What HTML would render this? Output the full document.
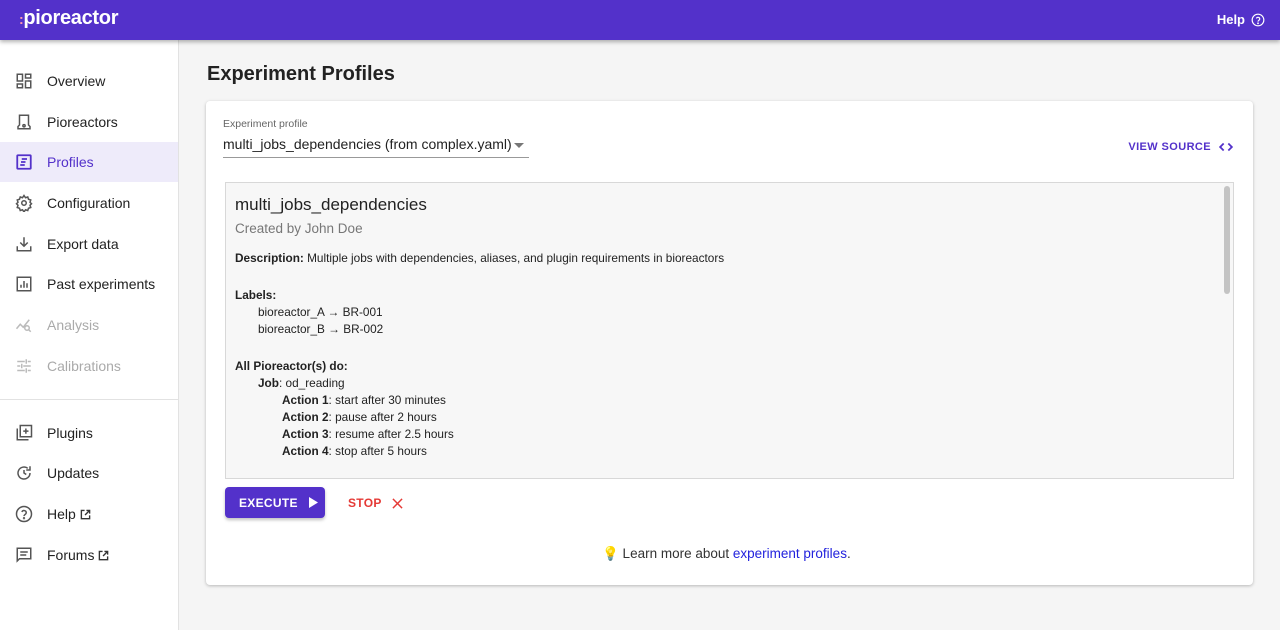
<!DOCTYPE html>
<html><head><meta charset="utf-8"><style>
*{box-sizing:border-box;margin:0;padding:0}
body{width:1280px;height:630px;overflow:hidden;font-family:"Liberation Sans",Arial,sans-serif;background:#f5f5f5;color:#222;position:relative}
.hdr{position:absolute;left:0;top:0;width:1280px;height:40px;background:#5331ca;box-shadow:0 2px 4px rgba(0,0,0,.3);z-index:2}
.logo{position:absolute;left:19px;top:7px;color:#fff;font-size:20px;font-weight:bold;letter-spacing:-.3px}
.help{position:absolute;right:15px;top:12px;color:#fff;font-size:13px;font-weight:bold;display:flex;align-items:center;gap:6px}
.side{position:absolute;left:0;top:40px;width:179px;height:590px;background:#fff;border-right:1px solid #e2e2e2}
.item{position:absolute;left:0;width:178px;height:40px;display:flex;align-items:center;font-size:14px;color:#222}
.item svg{position:absolute;left:15px}
.item span{position:absolute;left:47px}
.sel{background:#eeebfa;color:#5331ca}
.dis{color:#aaa}
.divd{position:absolute;left:0;top:359px;width:178px;border-top:1px solid #e2e2e2}
h1{position:absolute;left:207px;top:63px;font-size:20px;font-weight:bold;color:#222}
.card{position:absolute;left:206px;top:101px;width:1047px;height:484px;background:#fff;border-radius:4px;box-shadow:0 1px 3px rgba(0,0,0,.25)}
.lbl{position:absolute;left:17px;top:17px;font-size:10.5px;color:#666}
.sel2{position:absolute;left:17px;top:35px;width:306px;height:22px;border-bottom:1px solid #999;font-size:14px;color:#222;white-space:nowrap}
.caret{position:absolute;right:5px;top:7px;width:0;height:0;border-left:5px solid transparent;border-right:5px solid transparent;border-top:5px solid #777}
.vs{position:absolute;right:20px;top:40px;color:#5331ca;font-size:11px;font-weight:bold;letter-spacing:.4px;display:flex;align-items:center;gap:8px}
.box{position:absolute;left:19px;top:81px;width:1009px;height:297px;background:#f7f7f7;border:1px solid #d8d8d8;overflow:hidden}
.sb{position:absolute;right:3px;top:3px;width:6px;height:108px;background:#c4c4c4;border-radius:3px}
.box .t{position:absolute;left:9px;top:12px;font-size:17px;color:#222}
.box .c{position:absolute;left:9px;top:38px;font-size:13.5px;color:#777}
.ln{position:absolute;font-size:11.8px;color:#222;white-space:nowrap}
.ex{position:absolute;left:19px;top:386px;width:100px;height:31px;background:#5331ca;border-radius:4px;color:#fff;font-size:12px;font-weight:bold;letter-spacing:.3px;display:flex;align-items:center;padding-left:14px;gap:10px;box-shadow:0 2px 3px rgba(0,0,0,.25)}
.stop{position:absolute;left:142px;top:395px;color:#e53935;font-size:12px;font-weight:bold;letter-spacing:.3px;display:flex;align-items:center;gap:10px}
.learn{position:absolute;left:396px;top:445px;font-size:13.5px;color:#333}
.learn a{color:#2222dd;text-decoration:none}
</style></head><body>
<div class="hdr"><div class="logo"><span style="font-size:14px;color:#f9a">:</span>pioreactor</div>
<div class="help">Help <svg width="14" height="14" viewBox="0 0 24 24" fill="none" stroke="#fff" stroke-width="2"><circle cx="12" cy="12" r="10"/><path d="M9.2 9.3a3 3 0 0 1 5.8 1c0 2-3 2.5-3 4.5"/><circle cx="12" cy="17.6" r=".6" fill="#fff"/></svg></div></div>
<div class="side">
<div class="item" style="top:21px"><svg width="18" height="18" viewBox="0 0 24 24" fill="none" stroke="#555" stroke-width="2"><rect x="3" y="3" width="7" height="9"/><rect x="14" y="3" width="7" height="5"/><rect x="14" y="12" width="7" height="9"/><rect x="3" y="16" width="7" height="5"/></svg><span>Overview</span></div>
<div class="item" style="top:62px"><svg width="18" height="18" viewBox="0 0 24 24" fill="none" stroke="#555" stroke-width="2"><path d="M6 3h12v13l2 2v3H4v-3l2-2z"/><circle cx="12" cy="17" r="1.5"/></svg><span>Pioreactors</span></div>
<div class="item sel" style="top:102px"><svg width="18" height="18" viewBox="0 0 24 24" fill="none" stroke="#5331ca" stroke-width="2.4"><rect x="3" y="3" width="18" height="18" rx="1"/><path d="M9 8h7M8 12h6M7 16h6"/></svg><span>Profiles</span></div>
<div class="item" style="top:143px"><svg width="18" height="18" viewBox="0 0 24 24" fill="none" stroke="#555" stroke-width="2"><circle cx="12" cy="12" r="3"/><path d="M12 2l2 3 3-1 1 3 3 1-1 3 2 2-2 2 1 3-3 1-1 3-3-1-2 3-2-3-3 1-1-3-3-1 1-3-2-2 2-2-1-3 3-1 1-3 3 1z"/></svg><span>Configuration</span></div>
<div class="item" style="top:184px"><svg width="18" height="18" viewBox="0 0 24 24" fill="none" stroke="#555" stroke-width="2"><path d="M12 3v12M7 10l5 5 5-5M3 15v6h18v-6"/></svg><span>Export data</span></div>
<div class="item" style="top:224px"><svg width="18" height="18" viewBox="0 0 24 24" fill="none" stroke="#555" stroke-width="2"><rect x="3" y="3" width="18" height="18"/><path d="M8 17v-4M12 17V8M16 17v-6"/></svg><span>Past experiments</span></div>
<div class="item dis" style="top:265px"><svg width="18" height="18" viewBox="0 0 24 24" fill="none" stroke="#bbb" stroke-width="2"><path d="M2 17l5-6 4 4 8-10"/><circle cx="16" cy="16" r="3"/><path d="M18 18l3 3"/></svg><span>Analysis</span></div>
<div class="item dis" style="top:306px"><svg width="18" height="18" viewBox="0 0 24 24" fill="none" stroke="#bbb" stroke-width="2"><path d="M3 6h10M17 6h4M15 3v6M3 12h4M11 12h10M9 9v6M3 18h10M17 18h4M15 15v6"/></svg><span>Calibrations</span></div>
<div class="divd"></div>
<div class="item" style="top:373px"><svg width="18" height="18" viewBox="0 0 24 24" fill="none" stroke="#555" stroke-width="2"><rect x="7" y="2" width="15" height="15"/><path d="M3 6v15h15M14.5 6v7M11 9.5h7"/></svg><span>Plugins</span></div>
<div class="item" style="top:413px"><svg width="18" height="18" viewBox="0 0 24 24" fill="none" stroke="#555" stroke-width="2"><path d="M20 12a8 8 0 1 1-3-6.2M20 3v5h-5M12 8v4l3 2"/></svg><span>Updates</span></div>
<div class="item" style="top:454px"><svg width="18" height="18" viewBox="0 0 24 24" fill="none" stroke="#555" stroke-width="2"><circle cx="12" cy="12" r="10"/><path d="M9.2 9.3a3 3 0 0 1 5.8 1c0 2-3 2.5-3 4.5"/><circle cx="12" cy="17.6" r=".6"/></svg><span>Help <svg style="position:static;vertical-align:-1px" width="11" height="11" viewBox="0 0 24 24" fill="none" stroke="#333" stroke-width="3"><path d="M10 3H3v18h18v-7M14 3h7v7M21 3L11 13"/></svg></span></div>
<div class="item" style="top:495px"><svg width="18" height="18" viewBox="0 0 24 24" fill="none" stroke="#555" stroke-width="2"><path d="M3 3h18v14H6l-3 3z"/><path d="M7 8h10M7 12h8"/></svg><span>Forums <svg style="position:static;vertical-align:-1px" width="11" height="11" viewBox="0 0 24 24" fill="none" stroke="#333" stroke-width="3"><path d="M10 3H3v18h18v-7M14 3h7v7M21 3L11 13"/></svg></span></div>
</div>
<h1>Experiment Profiles</h1>
<div class="card">
<div class="lbl">Experiment profile</div>
<div class="sel2">multi_jobs_dependencies (from complex.yaml)<div class="caret"></div></div>
<div class="vs">VIEW SOURCE <svg width="14" height="12" viewBox="0 0 24 20" fill="none" stroke="#5331ca" stroke-width="3"><path d="M8 4l-6 6 6 6M16 4l6 6-6 6"/></svg></div>
<div class="box"><div class="sb"></div>
<div class="t">multi_jobs_dependencies</div>
<div class="c">Created by John Doe</div>
<div class="ln" style="left:9px;top:68px"><b>Description:</b> Multiple jobs with dependencies, aliases, and plugin requirements in bioreactors</div>
<div class="ln" style="left:9px;top:105px"><b>Labels:</b></div>
<div class="ln" style="left:32px;top:122px">bioreactor_A → BR-001</div>
<div class="ln" style="left:32px;top:139px">bioreactor_B → BR-002</div>
<div class="ln" style="left:9px;top:176px"><b>All Pioreactor(s) do:</b></div>
<div class="ln" style="left:32px;top:193px"><b>Job</b>: od_reading</div>
<div class="ln" style="left:56px;top:210px"><b>Action 1</b>: start after 30 minutes</div>
<div class="ln" style="left:56px;top:227px"><b>Action 2</b>: pause after 2 hours</div>
<div class="ln" style="left:56px;top:244px"><b>Action 3</b>: resume after 2.5 hours</div>
<div class="ln" style="left:56px;top:261px"><b>Action 4</b>: stop after 5 hours</div>
</div>
<div class="ex">EXECUTE <svg width="10" height="11" viewBox="0 0 10 11"><path d="M1 0l9 5.5L1 11z" fill="#fff"/></svg></div>
<div class="stop">STOP <svg width="11" height="11" viewBox="0 0 12 12" stroke="#e53935" stroke-width="1.6"><path d="M1 1l10 10M11 1L1 11"/></svg></div>
<div class="learn">💡 Learn more about <a>experiment profiles</a>.</div>
</div>
</body></html>
